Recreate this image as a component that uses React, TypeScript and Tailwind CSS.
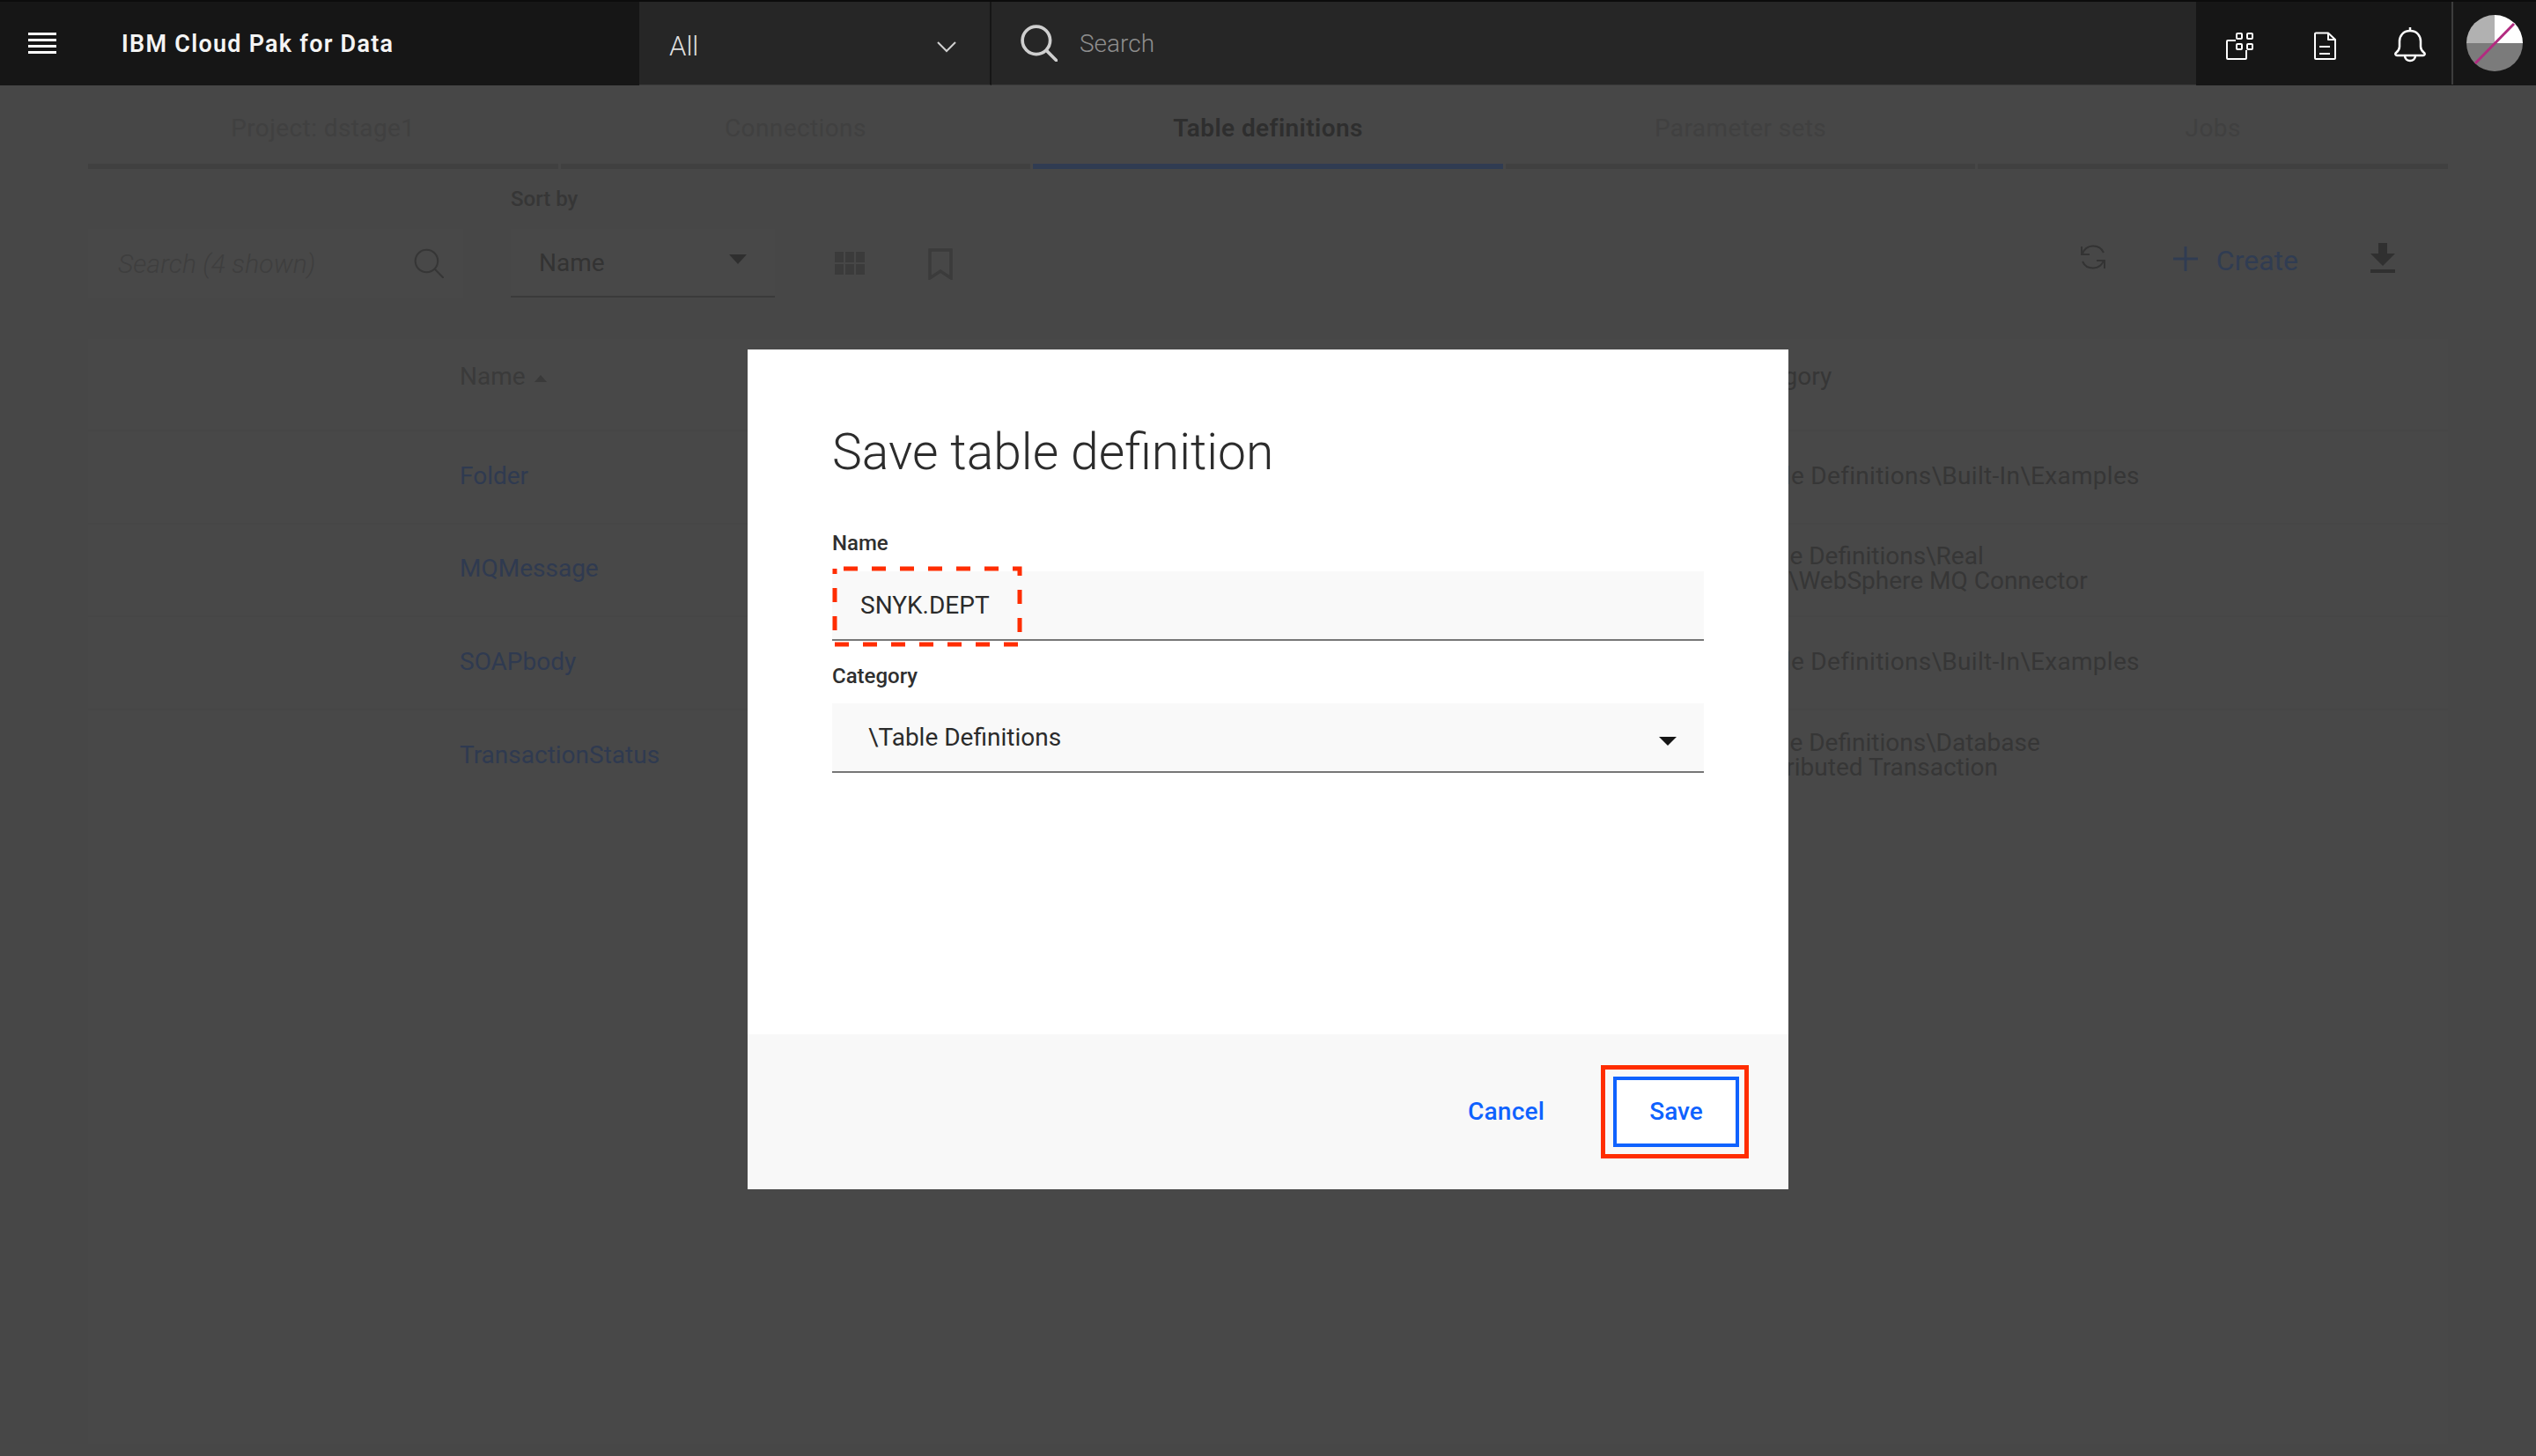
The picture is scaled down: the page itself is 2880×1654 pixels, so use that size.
import React from 'react';

const tabs = ['Project: dstage1', 'Connections', 'Table definitions', 'Parameter sets', 'Jobs'];

const rows = [
    { name: 'Folder', category: ['\\Table Definitions\\Built-In\\Examples'] },
    { name: 'MQMessage', category: ['\\Table Definitions\\Real', 'Time\\WebSphere MQ Connector'] },
    { name: 'SOAPbody', category: ['\\Table Definitions\\Built-In\\Examples'] },
    { name: 'TransactionStatus', category: ['\\Table Definitions\\Database', '\\Distributed Transaction'] },
];

function Hamburger() {
    return (
        <div className="flex flex-col justify-between w-8 h-6">
            <div className="h-[3px] bg-white" />
            <div className="h-[3px] bg-white" />
            <div className="h-[3px] bg-white" />
            <div className="h-[3px] bg-white" />
        </div>
    );
}

function AppsIcon() {
    return (
        <svg width="34" height="34" viewBox="0 0 34 34" fill="none" stroke="#fff" strokeWidth="2" strokeLinejoin="round">
            <rect x="12" y="3" width="6" height="6" rx="1" />
            <rect x="24" y="3" width="6" height="6" rx="1" />
            <rect x="12" y="15" width="6" height="6" rx="1" />
            <rect x="24" y="15" width="6" height="6" rx="1" />
            <path d="M11 11H2a1 1 0 0 0-1 1v19a1 1 0 0 0 1 1h20a1 1 0 0 0 1-1V22" />
        </svg>
    );
}

function DocIcon() {
    return (
        <svg width="26" height="34" viewBox="0 0 26 34" fill="none" stroke="#fff" strokeWidth="2" strokeLinejoin="round">
            <path d="M2 2.500h14L24 10v21a1 1 0 0 1-1 1H2a1 1 0 0 1-1-1V3.500a1 1 0 0 1 1-1Z" />
            <path d="M16 2.500V10h8" />
            <path d="M6 18h12M6 26h12" />
        </svg>
    );
}

function BellIcon() {
    return (
        <svg width="36" height="40" viewBox="0 0 36 40" fill="none" stroke="#fff" strokeWidth="2.500" strokeLinejoin="round">
            <path d="M18 0v4" />
            <path d="M18 4C10 4 6 10 6 16v6c0 3-1.500 5-4 7-1 1-1 3 1 3h30c2 0 2-2 1-3-2.500-2-4-4-4-7v-6c0-6-4-12-12-12Z" />
            <path d="M12 32c0 4 3 6 6 6s6-2 6-6" />
        </svg>
    );
}

function Avatar() {
    return (
        <svg width="64" height="64" viewBox="0 0 64 64">
            <path d="M32 32V0A32 32 0 0 0 0 32Z" fill="#b1b1b1" />
            <path d="M32 32V0A32 32 0 0 1 64 32Z" fill="#fff" />
            <path d="M0 32A32 32 0 0 0 64 32Z" fill="#7b7b7b" />
            <path d="M10 55L54 10" stroke="#b22a80" strokeWidth="3" />
        </svg>
    );
}

function SearchGlyph({ size, color, width }: { size: number; color: string; width: number }) {
    return (
        <svg width={size} height={size} viewBox="0 0 40 40" fill="none" stroke={color} strokeWidth={width}>
            <circle cx="17" cy="17" r="15" />
            <path d="M28 28l11 11" strokeLinecap="round" />
        </svg>
    );
}

function Header() {
    return (
        <header className="flex h-[97px] shrink-0 border-t-2 border-t-[#0c0c0c] bg-[#161616]">
            <div className="flex items-center w-[726px] bg-[#161616]">
                <div className="ml-8 w-[106px] mb-[2px]">
                    <Hamburger />
                </div>
                <span className="text-[27px] tracking-[1.25px] font-semibold text-[#f4f4f4] pt-[2px]">IBM Cloud Pak for Data</span>
            </div>
            <div className="flex items-center justify-between w-[400px] pl-[34px] pr-[38px] bg-[#262626] border-r-2 border-r-[#161616] border-b border-b-[#3c3c3c]">
                <span className="text-[31px] font-light text-[#dedede] pt-2">All</span>
                <svg width="22" height="14" viewBox="0 0 22 14" fill="none" stroke="#d0d0d0" strokeWidth="2" className="mt-2">
                    <path d="M1 2l10 10L21 2" />
                </svg>
            </div>
            <div className="flex items-center flex-1 pl-[33px] gap-[25px] bg-[#262626] border-b border-b-[#3c3c3c]">
                <SearchGlyph size={42} color="#cfcfcf" width={3.500} />
                <span className="text-[28px] font-light text-[#8e8e8e] pt-[2px]">Search</span>
            </div>
            <div className="flex items-start w-[290px] shrink-0 pl-[34px] pt-[29px] rounded-bl-[4px] bg-[#161616]">
                <div className="mt-1">
                    <AppsIcon />
                </div>
                <div className="mt-1 ml-[66px]">
                    <DocIcon />
                </div>
                <div className="ml-[65px]">
                    <BellIcon />
                </div>
            </div>
            <div className="flex items-center justify-center w-[96px] shrink-0 border-l-2 border-l-[#3d3d3d] mb-[1px]">
                <Avatar />
            </div>
        </header>
    );
}

function Tabs() {
    return (
        <div className="grid grid-cols-5 gap-[3px] ml-[100px] w-[2680px] h-[95px] shrink-0">
            {tabs.map((tab) => {
                const active = tab === 'Table definitions';
                return (
                    <div
                        key={tab}
                        className={`flex items-center justify-center border-b-[6px] pt-2 text-[28px] tracking-[0.4px] ${active
                            ? 'border-b-[#303c52] text-[#2e2e2e] font-semibold'
                            : 'border-b-[#404040] text-[#404040]'
                            }`}
                    >
                        {tab}
                    </div>
                );
            })}
        </div>
    );
}

function Toolbar() {
    return (
        <div className="flex items-end justify-between ml-[100px] w-[2680px] h-[146px] shrink-0">
            <div className="flex items-end">
                <div className="flex items-center justify-between w-[426px] h-[78px] pl-[34px] pr-[22px] bg-[#484848]">
                    <span className="text-[30px] tracking-[0.1px] font-light italic text-[#3e3e3e]">Search (4 shown)</span>
                    <SearchGlyph size={34} color="#363636" width={2.500} />
                </div>
                <div className="ml-[54px] w-[300px]">
                    <div className="text-[24px] font-medium leading-none mb-[22px] text-[#363636]">Sort by</div>
                    <div className="flex items-center justify-between h-[78px] pl-8 pr-8 border-b-2 border-b-[#3a3a3a] bg-[#484848]">
                        <span className="text-[28px] text-[#333] pt-[2px]">Name</span>
                        <svg width="20" height="11" viewBox="0 0 20 11" className="mb-2">
                            <path d="M0 0h20L10 11Z" fill="#2f2f2f" />
                        </svg>
                    </div>
                </div>
                <div className="grid grid-cols-3 grid-rows-2 gap-[2px] ml-[68px] mb-[26px] w-[34px] h-[26px]">
                    {[0, 1, 2, 3, 4, 5].map((i) => (
                        <div key={i} className="bg-[#3b3b3b]" />
                    ))}
                </div>
                <svg width="28" height="36" viewBox="0 0 28 36" fill="none" stroke="#3b3b3b" strokeWidth="3.500" className="ml-[72px] mb-5">
                    <path d="M2 34V2h24v32L14 26Z" />
                </svg>
            </div>
            <div className="flex items-start mr-[60px] mb-[28px] h-[34px]">
                <svg width="30" height="30" viewBox="0 0 30 30" fill="none" stroke="#333" strokeWidth="2" className="mt-[1px]">
                    <path d="M3 11A13 13 0 0 1 27 10M27 19A13 13 0 0 1 3 20" />
                    <path d="M2 3v9h9M28 28v-9h-9" />
                </svg>
                <svg width="28" height="28" viewBox="0 0 28 28" fill="none" stroke="#303c52" strokeWidth="3" className="ml-[76px] mt-1">
                    <path d="M14 0v28M0 14h28" />
                </svg>
                <span className="ml-[21px] text-[32px] leading-[40px] text-[#303c52]">Create</span>
                <svg width="28" height="34" viewBox="0 0 28 34" className="ml-[82px]">
                    <path d="M9 0h10v12h9L14 26 0 12h9Z" fill="#303030" />
                    <path d="M0 30h28v4H0Z" fill="#303030" />
                </svg>
            </div>
        </div>
    );
}

function Table() {
    return (
        <div className="ml-[100px] w-[2680px] h-[1255px] mt-[47px] shrink-0 bg-[#484848]">
            <div className="flex items-center h-[105px] pb-[18px] border-b-2 border-b-[#464646] text-[28px] text-[#3a3a3a]">
                <div className="flex items-center w-[1868px] pl-[422px]">
                    Name
                    <svg width="14" height="8" viewBox="0 0 14 8" className="ml-[10px] mt-1">
                        <path d="M0 8h14L7 0Z" fill="#3a3a3a" />
                    </svg>
                </div>
                <div className="text-[#363636]">Category</div>
            </div>
            {rows.map((row, i) => (
                <div
                    key={row.name}
                    className={`flex items-center h-[105.5px] pb-[2px] text-[28px] ${i < rows.length - 1 ? 'border-b-2 border-b-[#464646]' : ''}`}
                >
                    <div className="w-[1868px] pl-[422px] text-[#2f3a50]">{row.name}</div>
                    <div className="leading-[28px] text-[#363636]">
                        {row.category.map((line) => (
                            <div key={line} className={line.includes('Built-In') ? 'tracking-[0.3px]' : ''}>{line}</div>
                        ))}
                    </div>
                </div>
            ))}
        </div>
    );
}

function SaveDialog() {
    return (
        <div className="absolute left-[849px] top-[397px] flex flex-col w-[1182px] h-[954px] bg-white">
            <div className="flex-1 px-[96px] pt-[84px]">
                <h2 className="text-[57px] leading-[66px] font-light text-[#2c2c2c]">Save table definition</h2>
                <div className="mt-[55px] text-[24px] leading-[30px] font-medium text-[#2f2f2f]">Name</div>
                <div className="relative flex items-center h-[79px] mt-[17px] pl-8 bg-[#f9f9f9] border-b-2 border-b-[#777] text-[28px] text-[#2b2b2b]">
                    SNYK.DEPT
                    <svg width="216" height="92" viewBox="0 0 216 92" fill="none" className="absolute left-0 -top-[6px]">
                        <rect x="3" y="3" width="210" height="86" stroke="#ff2d00" strokeWidth="5" strokeDasharray="16 16" strokeDashoffset="-10" />
                    </svg>
                </div>
                <div className="mt-[25px] text-[24px] leading-[30px] font-medium text-[#2f2f2f]">Category</div>
                <div className="flex items-center justify-between h-[79px] mt-[16px] pl-[41px] pr-[31px] bg-[#f9f9f9] border-b-2 border-b-[#777] text-[28px] text-[#2b2b2b]">
                    \Table Definitions
                    <svg width="20" height="10" viewBox="0 0 20 10" className="mt-2">
                        <path d="M0 0h20L10 10Z" fill="#161616" />
                    </svg>
                </div>
            </div>
            <div className="flex items-center justify-end h-[176px] pr-[45px] gap-[64px] bg-[#f8f8f8]">
                <span className="text-[28px] tracking-[0.2px] font-medium text-[#0f62fe]">Cancel</span>
                <div className="border-[5px] border-[#ff2d00] pl-[9px] pr-[6px] py-[8px]">
                    <div className="flex items-center justify-center w-[143px] h-[80px] border-4 border-[#0f62fe] bg-white text-[28px] font-medium text-[#0f62fe]">
                        Save
                    </div>
                </div>
            </div>
        </div>
    );
}

export default function App() {
    return (
        <div className="relative flex flex-col w-[2880px] h-[1654px] overflow-hidden bg-[#474747] font-['Roboto',sans-serif]">
            <Header />
            <Tabs />
            <Toolbar />
            <Table />
            <SaveDialog />
        </div>
    );
}
